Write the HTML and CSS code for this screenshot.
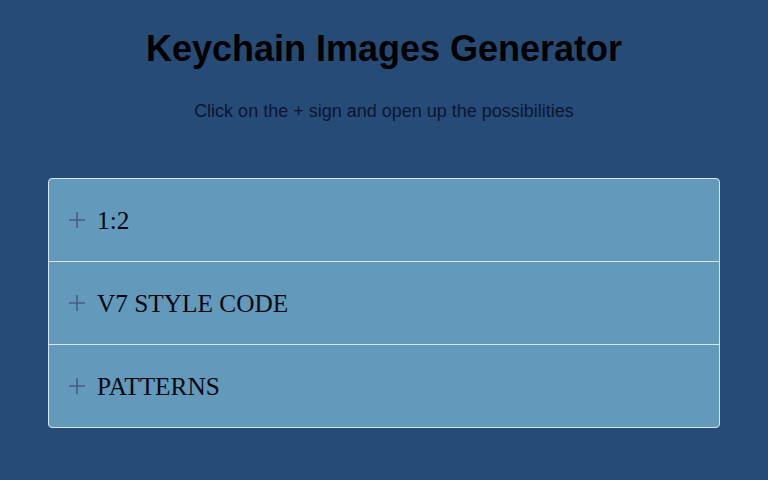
FILE: index.html
```html
<!DOCTYPE html>
<html lang="en">
<head>
  <meta charset="utf-8">
  <title>Keychain Images Generator</title>
  <link rel="stylesheet" href="styles.css">
</head>
<body>
  <h1 class="title">Keychain Images Generator</h1>
  <p class="lead">Click on the + sign and open up the possibilities</p>

  <div class="accordion">
    <div class="acc-item">
      <svg class="plus" width="18" height="18" viewBox="0 0 18 18"><path d="M9 1v16M1 9h16"/></svg>
      <span class="acc-label">1:2</span>
    </div>
    <div class="acc-item">
      <svg class="plus" width="18" height="18" viewBox="0 0 18 18"><path d="M9 1v16M1 9h16"/></svg>
      <span class="acc-label">V7 STYLE CODE</span>
    </div>
    <div class="acc-item">
      <svg class="plus" width="18" height="18" viewBox="0 0 18 18"><path d="M9 1v16M1 9h16"/></svg>
      <span class="acc-label">PATTERNS</span>
    </div>
  </div>
</body>
</html>
```

FILE: styles.css
```css
body {
  margin: 0;
  padding: 29px 48px 40px;
  background-color: #264b77;
  font-family: "Liberation Sans", Arial, sans-serif;
}

.title {
  margin: 0;
  font-size: 36px;
  line-height: 40px;
  text-align: center;
  color: #000;
}

.lead {
  margin: 32px 0 0;
  font-size: 18px;
  line-height: 20px;
  text-align: center;
  color: #0b1630;
}

/* accordion box */
.accordion {
  margin-top: 57px;
  border: 1px solid #d6e6f0;
  border-radius: 4px;
  background-color: #6399bb;
  overflow: hidden;
}

.acc-item {
  display: flex;
  align-items: center;
  gap: 11px;
  height: 82px;
  padding-left: 19px;
}
.acc-item + .acc-item {
  border-top: 1px solid #d6e6f0;
}

.plus {
  flex: none;
  stroke: #4a5c7f;
  stroke-width: 1.6;
  fill: none;
}

.acc-label {
  padding-top: 1px;
  font-family: "Liberation Serif", "Times New Roman", serif;
  font-size: 25.3px;
  color: #05080f;
}
```
